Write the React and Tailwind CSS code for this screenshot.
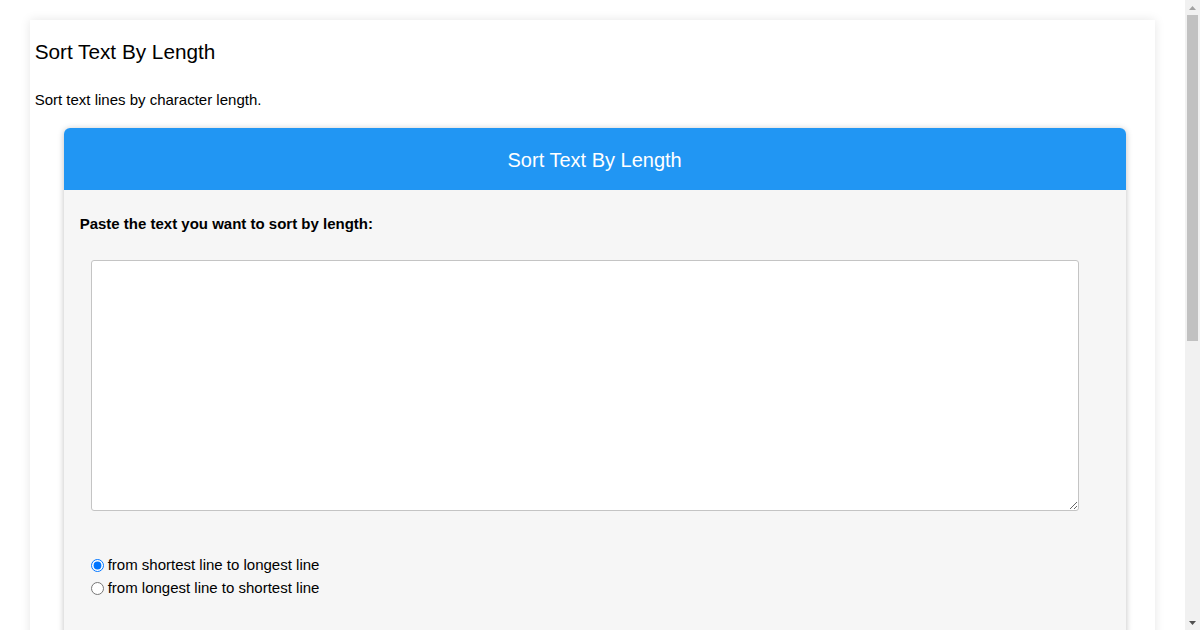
import React, { useState } from "react";

const ORDER_OPTIONS = [
  { label: "from shortest line to longest line", value: "asc" },
  { label: "from longest line to shortest line", value: "desc" },
];

// page scrollbar as it shows in the screenshot
const ScrollBar = () => (
  <div className="w-[15px] shrink-0 h-full bg-[#f1f1f1] flex flex-col items-center">
    <div className="h-[15px] w-full flex items-center justify-center">
      <svg width="9" height="6" viewBox="0 0 9 6">
        <polygon points="4.5,1 8,5 1,5" fill="#a3a3a3" />
      </svg>
    </div>
    <div className="flex-1 w-full px-[2px]">
      <div className="h-[326px] bg-[#c1c1c1]" />
    </div>
    <div className="h-[15px] w-full flex items-center justify-center">
      <svg width="9" height="6" viewBox="0 0 9 6">
        <polygon points="1,1 8,1 4.5,5" fill="#505050" />
      </svg>
    </div>
  </div>
);

const App = () => {
  const [text, setText] = useState("");
  const [order, setOrder] = useState("asc");

  return (
    <div className="h-screen flex overflow-hidden bg-white font-['Liberation_Sans',Arial,sans-serif] text-black">
      <div className="flex-1 min-w-0 overflow-hidden">
        <div className="w-[95%] mx-auto mt-[20px] bg-white shadow-[0_0_10px_rgba(0,0,0,0.1)] px-[5px] pt-[20px] pb-[40px]">
          <h1 className="text-[20.75px] leading-[24px] font-normal">Sort Text By Length</h1>
          <p className="mt-[27px] text-[15px] leading-[18px]">Sort text lines by character length.</p>

          <div className="mt-[19px] ml-[29px] w-[1062px] rounded-[6px] shadow-[0_1px_6px_rgba(0,0,0,0.25)] overflow-hidden">
            <div className="h-[62px] bg-[#2196f3] flex items-center justify-center pt-[1px]">
              <h2 className="text-[20px] text-white font-normal">Sort Text By Length</h2>
            </div>

            <div className="bg-[#f6f6f6] px-[16px] pt-[25px] min-h-[930px]">
              <label htmlFor="text" className="block text-[15px] leading-[18px] font-bold">
                Paste the text you want to sort by length:
              </label>
              <textarea
                id="text"
                value={text}
                onChange={(e) => setText(e.target.value)}
                className="block mt-[27px] ml-[11px] w-[988px] h-[251px] bg-white border border-[#c4c4c4] rounded-[3px] p-2 text-[15px] outline-none resize"
              />

              <div className="mt-[43px] ml-[11px] flex flex-col">
                {ORDER_OPTIONS.map((opt) => (
                  <label key={opt.value} className="flex items-center h-[23px] text-[15px]">
                    <input
                      type="radio"
                      name="order"
                      value={opt.value}
                      checked={order === opt.value}
                      onChange={() => setOrder(opt.value)}
                      className="m-0 mr-[4px] w-[13px] h-[13px]"
                    />
                    {opt.label}
                  </label>
                ))}
              </div>
            </div>
          </div>
        </div>
      </div>
      <ScrollBar />
    </div>
  );
};

export default App;
